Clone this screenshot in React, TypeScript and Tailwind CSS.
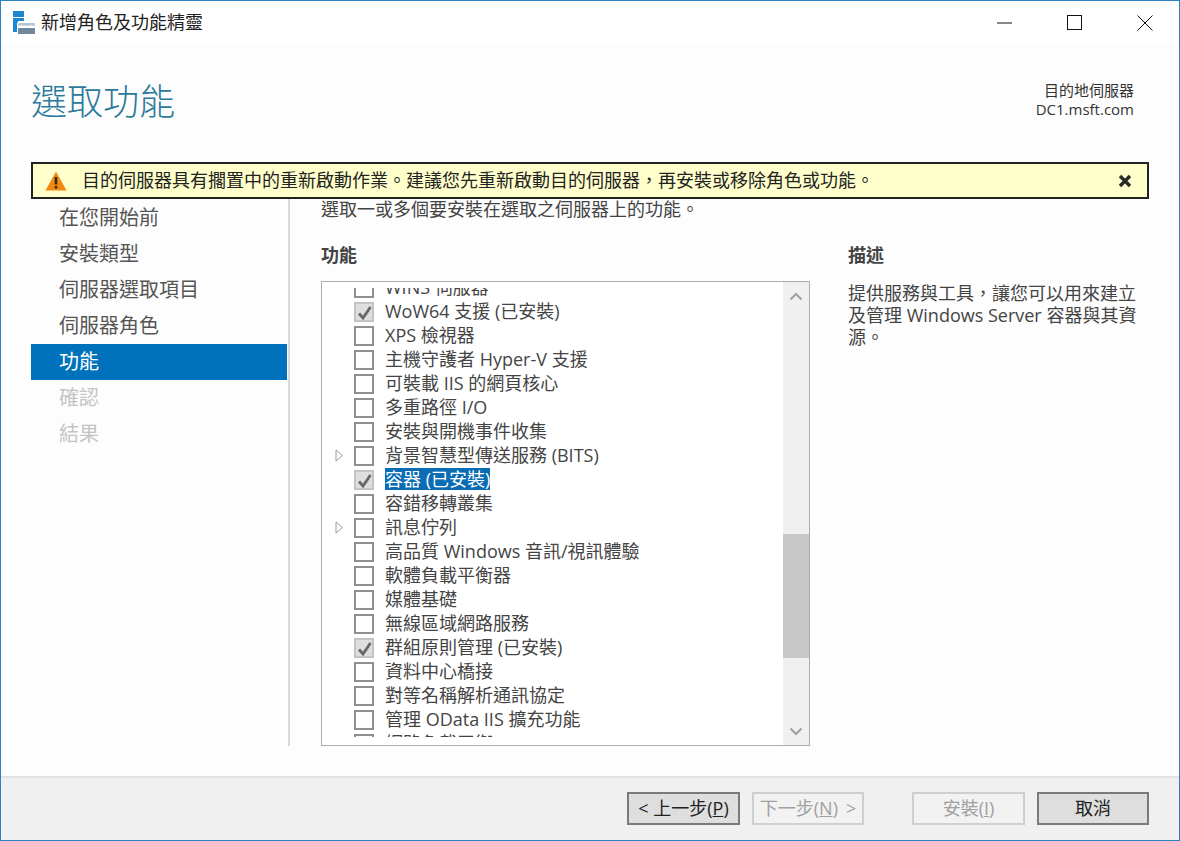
const font = { fontFamily: '"Open Sans", "Noto Sans CJK TC", sans-serif' };

type Row = { t: string; c?: boolean; e?: boolean; s?: boolean };
const rows: Row[] = [
  { t: "WINS 伺服器" },
  { t: "WoW64 支援 (已安裝)", c: true },
  { t: "XPS 檢視器" },
  { t: "主機守護者 Hyper-V 支援" },
  { t: "可裝載 IIS 的網頁核心" },
  { t: "多重路徑 I/O" },
  { t: "安裝與開機事件收集" },
  { t: "背景智慧型傳送服務 (BITS)", e: true },
  { t: "容器 (已安裝)", c: true, s: true },
  { t: "容錯移轉叢集" },
  { t: "訊息佇列", e: true },
  { t: "高品質 Windows 音訊/視訊體驗" },
  { t: "軟體負載平衡器" },
  { t: "媒體基礎" },
  { t: "無線區域網路服務" },
  { t: "群組原則管理 (已安裝)", c: true },
  { t: "資料中心橋接" },
  { t: "對等名稱解析通訊協定" },
  { t: "管理 OData IIS 擴充功能" },
  { t: "網路負載平衡" },
];

const nav = ["在您開始前", "安裝類型", "伺服器選取項目", "伺服器角色", "功能", "確認", "結果"];

const alertText = "目的伺服器具有擱置中的重新啟動作業。建議您先重新啟動目的伺服器\uFF0C再安裝或移除角色或功能。";
const descText = "提供服務與工具\uFF0C讓您可以用來建立及管理 Windows Server 容器與其資源。";

function Check({ on }: { on?: boolean }) {
  return (
    <span className={`mt-[2px] flex h-[20px] w-[20px] items-center justify-center border-2 ${on ? "border-[#c4c4c4] bg-[#dedede]" : "border-[#8f8f8f] bg-white"}`}>
      {on && (
        <svg width="16" height="16" viewBox="0 0 16 16" fill="none">
          <path d="M3 9.5 L7 14 L14.5 3" stroke="#666" strokeWidth="2.8" />
        </svg>
      )}
    </span>
  );
}

function Btn({ children, off, w }: { children: React.ReactNode; off?: boolean; w: string }) {
  return (
    <div className={`flex h-[33px] items-center justify-center border-2 text-[18px] leading-none ${w} ${off ? "border-[#cfcfcf] bg-[#f2f2f2] text-[#a0a0a0]" : "border-[#7a7a7a] bg-[#dedede] text-[#222]"}`}>
      {children}
    </div>
  );
}

export default function App() {
  return (
    <div style={font} className="flex h-[841px] w-[1180px] flex-col overflow-hidden border border-[#2b83c3] bg-[#fdfdfd] text-[#333]">
      <div className="flex h-[43px] shrink-0 items-center bg-white pl-[12px] pr-[26px]">
        <svg width="24" height="24" viewBox="0 0 24 24">
          <rect x="0" y="0" width="11" height="6" fill="#1a87d0" />
          <rect x="0" y="7" width="5" height="14" fill="#1a87d0" />
          <rect x="5" y="7" width="6" height="3" fill="#1a87d0" />
          <path d="M4 11.5h19v12H4z" fill="#fff" />
          <path d="M5 15.5v-2.5q0-1 1-1h15q1 0 1 1v2.5z" fill="#b9c6cf" />
          <path d="M5 17h17v6H5z" fill="#6f8aa0" />
          <path d="M5 15.5h17" stroke="#fff" strokeWidth="1.4" />
          <path d="M8.5 14v3M18.5 14v3" stroke="#fff" strokeWidth="1.2" />
        </svg>
        <span className="ml-[4px] text-[18px] text-[#222]">新增角色及功能精靈</span>
        <div className="ml-auto flex items-center gap-[54px]">
          <svg width="16" height="16" viewBox="0 0 16 16"><path d="M0 8h15" stroke="#111" strokeWidth="1" /></svg>
          <svg width="16" height="16" viewBox="0 0 16 16"><rect x="0.5" y="0.5" width="14" height="14" fill="none" stroke="#111" /></svg>
          <svg width="16" height="16" viewBox="0 0 16 16"><path d="M0.5 0.5l15 15M15.5 0.5l-15 15" stroke="#111" strokeWidth="1" /></svg>
        </div>
      </div>

      <div className="flex h-[118px] shrink-0 justify-between pl-[30px] pr-[45px]">
        <h1 className="mt-[34px] text-[36px] font-light leading-[48px] text-[#2a7a9b]">選取功能</h1>
        <div className="mt-[37px] text-right text-[15px] leading-[19px] text-[#333]">
          <div>目的地伺服器</div>
          <div>DC1.msft.com</div>
        </div>
      </div>

      <div className="mx-[30px] flex h-[37px] shrink-0 items-center border-2 border-[#222] bg-[#ffffcc] pl-[12px] pr-[15px] text-[18px] text-[#222]">
        <svg width="22" height="20" viewBox="0 0 22 20">
          <path d="M11 0.5 L21.5 19.5 H0.5 Z" fill="#f08a10" />
          <path d="M9.7 6h2.6v7.5H9.7zM9.7 15h2.6v2.6H9.7z" fill="#3a2a10" />
        </svg>
        <span className="ml-[15px] whitespace-nowrap">{alertText}</span>
        <svg className="ml-auto" width="14" height="14" viewBox="0 0 14 14">
          <path d="M2 2l10 10M12 2L2 12" stroke="#2a2a2a" strokeWidth="3.4" />
        </svg>
      </div>

      <div className="flex min-h-0 flex-1">
        <div className="ml-[30px] flex h-[547px] w-[259px] flex-col border-r-2 border-[#d9d9d9] pr-[1px] pt-[1px]">
          {nav.map((n, i) => (
            <div
              key={n}
              className={`flex h-[36px] items-center pl-[28px] text-[20px] leading-none ${i === 4 ? "bg-[#0072bc] text-white" : i > 4 ? "text-[#c4c4c4]" : "text-[#555]"}`}
            >
              {n}
            </div>
          ))}
        </div>

        <div className="ml-[31px] flex w-[489px] flex-col">
          <div className="flex h-[20px] items-center text-[18px] text-[#444]">選取一或多個要安裝在選取之伺服器上的功能。</div>
          <div className="mt-[24px] flex h-[38px] text-[18px] font-semibold leading-[24px] text-[#444]">功能</div>
          <div className="flex h-[465px] overflow-hidden border border-[#adadad] bg-white">
            <div className="mb-[8px] mt-[6px] min-w-0 flex-1 overflow-hidden">
              <div className="-mt-[13px]">
                {rows.map((r) => (
                  <div key={r.t} className="flex h-[24px] items-center pl-[13px]">
                    <span className="flex w-[19px] justify-start">
                      {r.e && (
                        <svg width="9" height="13" viewBox="0 0 9 13">
                          <path d="M1 1 L7.5 6.5 L1 12 Z" fill="#fff" stroke="#9a9a9a" />
                        </svg>
                      )}
                    </span>
                    <Check on={r.c} />
                    <span className={`ml-[11px] whitespace-nowrap text-[18px] leading-[22px] ${r.s ? "bg-[#0a6cb4] text-white" : "text-[#444]"}`}>{r.t}</span>
                  </div>
                ))}
              </div>
            </div>
            <div className="flex w-[26px] shrink-0 flex-col bg-[#f0f0f0]">
              <div className="flex h-[28px] items-center justify-center">
                <svg width="14" height="9" viewBox="0 0 14 9"><path d="M1.5 7.5 L7 2 L12.5 7.5" fill="none" stroke="#a0a0a0" strokeWidth="2" /></svg>
              </div>
              <div className="mt-[224px] h-[124px] bg-[#c8c8c8]" />
              <div className="mt-auto flex h-[28px] items-center justify-center">
                <svg width="14" height="9" viewBox="0 0 14 9"><path d="M1.5 1.5 L7 7 L12.5 1.5" fill="none" stroke="#a0a0a0" strokeWidth="2" /></svg>
              </div>
            </div>
          </div>
        </div>

        <div className="ml-[38px] flex w-[290px] flex-col">
          <div className="mt-[44px] h-[38px] text-[18px] font-semibold leading-[24px] text-[#444]">描述</div>
          <div className="mt-[1px] text-[18px] leading-[22px] text-[#444]">{descText}</div>
        </div>
      </div>

      <div className="flex h-[64px] shrink-0 items-center border-t-2 border-[#e2e2e2] bg-[#f0f0f0] pb-[2px] pl-[626px]">
        <Btn w="w-[113px]"><span>&lt; 上一步(<u>P</u>)</span></Btn>
        <div className="ml-[12px]"><Btn off w="w-[112px]"><span>下一步(<u>N</u>)<span className="ml-[8px]">&gt;</span></span></Btn></div>
        <div className="ml-[48px]"><Btn off w="w-[113px]"><span>安裝(<u>I</u>)</span></Btn></div>
        <div className="ml-[12px]"><Btn w="w-[112px]">取消</Btn></div>
      </div>
    </div>
  );
}
